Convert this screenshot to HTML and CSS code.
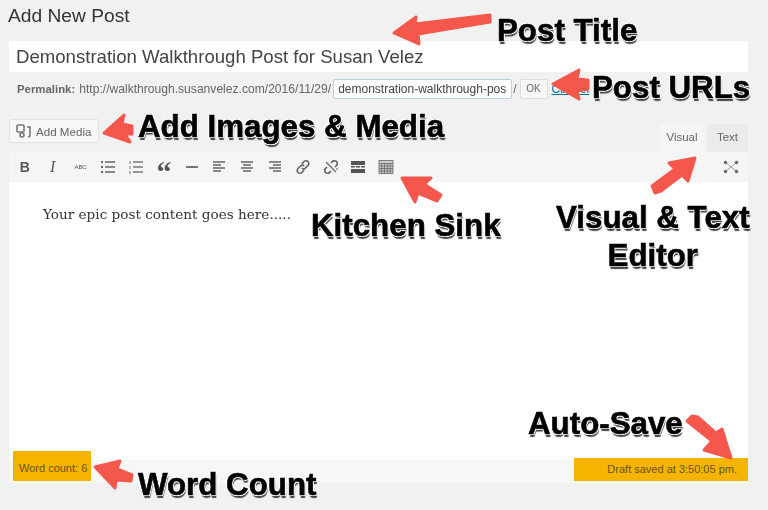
FILE: index.html
```html
<!DOCTYPE html>
<html>
  <head>
    <title>Add New Post</title>
    <link rel="stylesheet" href="styles.css">
  </head>
  <body>
    <div class="page">
      <h1 class="page-title">Add New Post</h1>
      <div class="title-box">Demonstration Walkthrough Post for Susan Velez</div>
      <div class="permalink">
        <b>Permalink:</b>
        <span class="base-url">http://walkthrough.susanvelez.com/2016/11/29/</span>
        <span class="slug">demonstration-walkthrough-pos</span>
        <span class="slash">/</span>
        <span class="ok-btn">OK</span>
        <a class="cancel">Cancel</a>
      </div>

      <div class="editor-top">
        <div class="media-btn">
          <svg width="16" height="16" viewBox="0 0 16 16" fill="none" stroke="#777" stroke-width="1.6">
            <rect x="1" y="2" width="7" height="7" rx="1"/>
            <circle cx="6" cy="12" r="2" />
            <path d="M11 4h3v8c0 1-1 2-2 2"/>
          </svg>
          <span>Add Media</span>
        </div>
        <div class="tabs">
          <span class="tab active">Visual</span>
          <span class="tab">Text</span>
        </div>
      </div>

      <div class="toolbar">
        <span class="tool tool-b">B</span>
        <span class="tool tool-i">I</span>
        <span class="tool tool-abc">ABC</span>
        <span class="tool">
          <svg width="16" height="14" viewBox="0 0 16 14" stroke="#666" stroke-width="1.3">
            <path d="M5 2h10M5 7h10M5 12h10"/><path stroke-width="2" d="M1 2h2M1 7h2M1 12h2"/>
          </svg>
        </span>
        <span class="tool">
          <svg width="16" height="14" viewBox="0 0 16 14" stroke="#777" stroke-width="1.3">
            <path d="M5 2h10M5 7h10M5 12h10"/><path stroke-width="1" d="M2 1v3M2 6v3M2 11v3"/>
          </svg>
        </span>
        <span class="tool tool-quote">&#8220;</span>
        <span class="tool">
          <svg width="14" height="14" viewBox="0 0 14 14" stroke="#555" stroke-width="1.6"><path d="M1 7h12"/></svg>
        </span>
        <span class="tool">
          <svg width="14" height="14" viewBox="0 0 14 14" stroke="#666" stroke-width="1.3"><path d="M1 2h12M1 5h8M1 8h12M1 11h8"/></svg>
        </span>
        <span class="tool">
          <svg width="14" height="14" viewBox="0 0 14 14" stroke="#666" stroke-width="1.3"><path d="M1 2h12M3 5h8M1 8h12M3 11h8"/></svg>
        </span>
        <span class="tool">
          <svg width="14" height="14" viewBox="0 0 14 14" stroke="#666" stroke-width="1.3"><path d="M1 2h12M5 5h8M1 8h12M5 11h8"/></svg>
        </span>
        <span class="tool">
          <svg width="16" height="16" viewBox="0 0 16 16" fill="none" stroke="#666" stroke-width="1.7">
            <path d="M7 5l2-2.500c1-1 3-1 4 0s1 3 0 4L10.500 9c-1 1-2.500 1-3.500 0"/>
            <path d="M9 11l-2 2.500c-1 1-3 1-4 0s-1-3 0-4L5.500 7c1-1 2.500-1 3.500 0"/>
          </svg>
        </span>
        <span class="tool">
          <svg width="16" height="16" viewBox="0 0 16 16" fill="none" stroke="#666" stroke-width="1.7">
            <path d="M8 4l1.500-1.500c1-1 3-1 4 0s1 3 0 4L12 8"/>
            <path d="M8 12l-1.500 1.500c-1 1-3 1-4 0s-1-3 0-4L4 8"/>
            <path stroke-width="1.200" d="M3 3l10 10M10 1v2M1 10h2M13 10h2M6 13v2"/>
          </svg>
        </span>
        <span class="tool">
          <svg width="14" height="14" viewBox="0 0 14 14" fill="#555">
            <rect x="0" y="1" width="14" height="4"/><rect x="0" y="6" width="4" height="1.500"/><rect x="5" y="6" width="4" height="1.500"/><rect x="10" y="6" width="4" height="1.500"/><rect x="0" y="9" width="14" height="4"/>
          </svg>
        </span>
        <span class="tool">
          <svg width="16" height="16" viewBox="0 0 16 16" fill="#ccc" stroke="#666" stroke-width=".8">
            <rect x="1" y="1.500" width="14" height="13"/>
            <path fill="none" d="M1 4.500h14M1 7h14M1 9.500h14M1 12h14M3.800 4.500v10M6.600 4.500v10M9.400 4.500v10M12.200 4.500v10"/>
          </svg>
        </span>
        <span class="tool tool-full">
          <svg width="16" height="14" viewBox="0 0 16 14" fill="#666" stroke="#666" stroke-width="1">
            <path d="M3 3l10 8M13 3L3 11" stroke-width=".6"/>
            <circle cx="2.500" cy="2.500" r="1.300"/><circle cx="13.500" cy="2.500" r="1.300"/><circle cx="2.500" cy="11.500" r="1.300"/><circle cx="13.500" cy="11.500" r="1.300"/>
          </svg>
        </span>
      </div>

      <div class="content">
        <p>Your epic post content goes here.....</p>
      </div>
      <div class="status-bar"></div>
    </div>

    <!-- highlights and callouts drawn on top of the screenshot -->
    <div class="hl hl-words">Word count: 6</div>
    <div class="hl hl-draft">Draft saved at 3:50:05 pm.</div>

    <svg class="arrows" width="768" height="510" viewBox="0 0 768 510" fill="#f4574c" stroke="#f4574c" stroke-width="3" stroke-linejoin="round">
      <polygon points="394,33 416,17 415,24 490,15 490,22 418,34 419,44"/>
      <polygon points="553,84 579,70 577,79 588,80 588,89 577,91 579,99"/>
      <polygon points="104,133 124,115 122,124 132,126 132,134 125,134 130,142"/>
      <polygon points="402,178 431,178 424,184 441,195 437,201 418,193 415,202"/>
      <polygon points="695,158 669,163 675,169 652,186 655,193 661,191 682,175 688,181"/>
      <polygon points="731,458 704,450 712,441 687,421 692,416 698,417 716,433 722,429"/>
      <polygon points="95,467 120,461 117,469 132,475 131,481 116,480 115,488"/>
    </svg>

    <span class="note note-title">Post Title</span>
    <span class="note note-urls">Post URLs</span>
    <span class="note note-media">Add Images &amp; Media</span>
    <span class="note note-sink">Kitchen Sink</span>
    <span class="note note-editor">Visual &amp; Text<br>Editor</span>
    <span class="note note-save">Auto-Save</span>
    <span class="note note-count">Word Count</span>
  </body>
</html>
```

FILE: styles.css
```css
html, body {
  margin: 0;
  width: 768px;
  height: 510px;
  overflow: hidden;
}
body {
  position: relative;
  background: #f1f1f1;
  font-family: "Liberation Sans", Arial, sans-serif;
  color: #555;
  /* the source image is a soft jpeg */
  filter: blur(.4px);
}
.page {
  padding: 0 20px 0 9px;
}
.page-title {
  margin: 0;
  height: 41px;
  margin-left: -1px;
  font-size: 19.2px;
  font-weight: 400;
  line-height: 31px;
  color: #333;
}
.title-box {
  height: 31px;
  background: #fff;
  padding-left: 7px;
  font-size: 18.6px;
  line-height: 32px;
  color: #444;
}
.permalink {
  display: flex;
  align-items: center;
  height: 20px;
  margin-top: 7px;
  padding-left: 8px;
  font-size: 12.1px;
  color: #666;
}
.permalink b {
  margin-right: 4px;
  font-size: 11.4px;
}
.slug {
  box-sizing: border-box;
  width: 179px;
  height: 20px;
  margin-left: 2px;
  padding-left: 4px;
  overflow: hidden;
  background: #fff;
  border: 1px solid #b5d5da;
  border-radius: 2px;
  font-size: 12px;
  line-height: 18px;
  white-space: nowrap;
  color: #444;
}
.slash {
  margin: 0 3px 0 1px;
}
.ok-btn {
  width: 28px;
  height: 20px;
  background: #f7f7f7;
  border: 1px solid #ddd;
  border-radius: 2px;
  box-sizing: border-box;
  text-align: center;
  line-height: 18px;
  font-size: 10px;
}
.cancel {
  margin-left: 4px;
  color: #0073aa;
  text-decoration: underline;
}
.editor-top {
  display: flex;
  justify-content: space-between;
  align-items: flex-end;
  height: 53px;
}
.media-btn {
  display: flex;
  align-items: center;
  gap: 4px;
  box-sizing: border-box;
  width: 90px;
  height: 24px;
  margin-bottom: 9px;
  padding-left: 6px;
  background: #f7f7f7;
  border: 1px solid #e2e2e2;
  border-radius: 2px;
  font-size: 11.6px;
  color: #666;
}
.tabs {
  display: flex;
  gap: 3px;
  font-size: 11.5px;
}
.tab {
  box-sizing: border-box;
  width: 41px;
  height: 28px;
  background: #ebebeb;
  text-align: center;
  line-height: 27px;
  color: #666;
}
.tab.active {
  width: 44px;
  background: #f5f5f5;
}
.toolbar {
  display: flex;
  align-items: center;
  height: 30px;
  padding-left: 2px;
  background: #f5f5f5;
}
.tool {
  display: flex;
  justify-content: center;
  align-items: center;
  width: 27.8px;
  height: 30px;
  color: #555;
}
.tool-b {
  font-size: 14px;
  font-weight: 700;
}
.tool-i {
  font-family: "Liberation Serif", serif;
  font-size: 16px;
  font-style: italic;
}
.tool-abc {
  font-size: 6px;
  letter-spacing: -.2px;
}
.tool-quote {
  font-family: "Liberation Serif", serif;
  font-size: 30px;
  font-weight: 700;
  line-height: 40px;
  padding-top: 10px;
  box-sizing: border-box;
}
.tool-full {
  margin-left: auto;
  margin-right: 3px;
}
.content {
  height: 278px;
  background: #fff;
}
.content p {
  margin: 0;
  padding: 23px 0 0 34px;
  font-family: "DejaVu Serif", serif;
  font-size: 13.6px;
  line-height: 18px;
  color: #333;
}
.status-bar {
  height: 23px;
  background: #f7f7f7;
}
.hl {
  position: absolute;
  box-sizing: border-box;
  background: #f4b400;
  font-size: 11px;
  color: #6a5410;
}
.hl-words {
  left: 13px;
  top: 451px;
  width: 78px;
  height: 30px;
  padding-left: 6px;
  line-height: 35px;
}
.hl-draft {
  left: 574px;
  top: 458px;
  width: 174px;
  height: 23px;
  padding-right: 11px;
  text-align: right;
  line-height: 23px;
}
.arrows {
  position: absolute;
  left: 0;
  top: 0;
}
.note {
  position: absolute;
  font-size: 31.3px;
  font-weight: 700;
  line-height: 38px;
  color: #000;
  white-space: nowrap;
  -webkit-text-stroke: .6px #000;
  text-shadow: -1px -1px 0 #fff, 1px -1px 0 #fff, -1px 1px 0 #fff, 1px 1px 0 #fff, 1px 3px 1px #444;
}
.note-title { left: 497px; top: 12px; }
.note-urls { left: 592px; top: 69px; }
.note-media { left: 138px; top: 108px; }
.note-sink { left: 311px; top: 207px; }
.note-editor { left: 556px; top: 199px; text-align: center; }
.note-save { left: 528px; top: 405px; }
.note-count { left: 138px; top: 466px; }
```
